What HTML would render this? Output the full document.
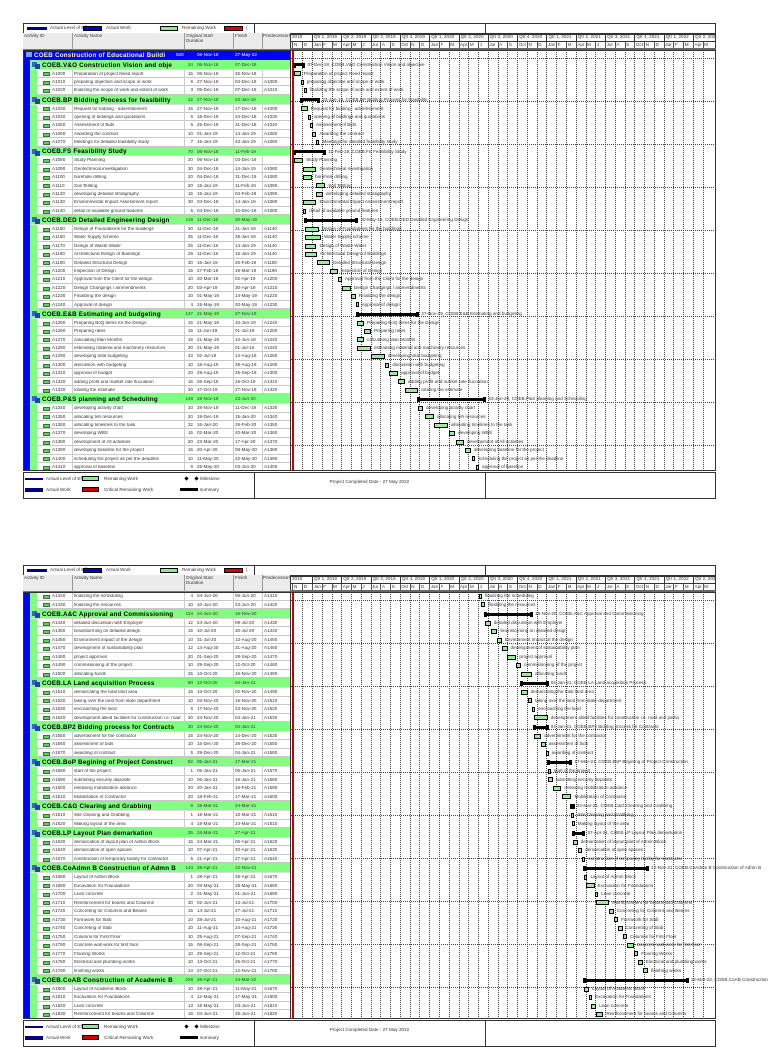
<!DOCTYPE html>
<html><head><meta charset="utf-8">
<style>
body{margin:0;width:768px;height:1024px;background:#fff;position:relative;overflow:hidden;font-family:"Liberation Sans",sans-serif;}
#root div{position:absolute;box-sizing:border-box;white-space:nowrap;}
.t{font-size:4.6px;color:#333;line-height:1;}
</style></head><body><div id="root"></div>
<script>
const R=document.getElementById('root');
function E(x,y,w,h,css,txt,cls){const d=document.createElement('div');d.style.cssText=`left:${x}px;top:${y}px;`+(w!=null?`width:${w}px;`:'')+(h!=null?`height:${h}px;`:'')+(css||'');if(txt!=null)d.textContent=txt;if(cls)d.className=cls;R.appendChild(d);return d;}
const MO=['Jan','Feb','Mar','Apr','May','Jun','Jul','Aug','Sep','Oct','Nov','Dec'];
function X(s,add){const [d,m,y]=s.split('-');return 312+((2000+ +y-2019)*12+MO.indexOf(m)+(+d-1+(add||0))/30.5)*9.77;}
const P1=[
['T','COEB','Construction of Educational Buildi','928','06-Nov-18','27-May-22',''],
['G','COEB.V&O','Construction Vision and obje','24','06-Nov-18','07-Dec-18','Construction Vision and objective'],
['t','A1000','Preparation of project Need report','15','06-Nov-18','26-Nov-18',''],
['t','A1010','preparing objective and scope or work','6','27-Nov-18','04-Dec-18','A1000'],
['t','A1020','finalizing the scope of work and extent of work','3','05-Dec-18','07-Dec-18','A1010'],
['G','COEB.BP','Bidding Process for feasibility','42','27-Nov-18','23-Jan-19','Bidding Process for feasibility'],
['t','A1030','Request for bidding - advertisement','15','27-Nov-18','17-Dec-18','A1000'],
['t','A1040','opening of biddings and quotations','5','18-Dec-18','24-Dec-18','A1030'],
['t','A1050','Assessment of Bids','5','25-Dec-18','31-Dec-18','A1040'],
['t','A1060','Awarding the contract','10','01-Jan-19','14-Jan-19','A1050'],
['t','A1070','Meetings for detailed feasibility study','7','15-Jan-19','23-Jan-19','A1060'],
['G','COEB.FS','Feasibility Study','70','06-Nov-18','11-Feb-19','Feasibility Study'],
['t','A1080','Study Planning','20','06-Nov-18','03-Dec-18',''],
['t','A1090','Geotechnical investigation','30','04-Dec-18','14-Jan-19','A1080'],
['t','A1100','borehole drilling','20','04-Dec-18','31-Dec-18','A1080'],
['t','A1110','Soil Testing','20','15-Jan-19','11-Feb-19','A1090'],
['t','A1120','developing detailed stratigraphy','15','15-Jan-19','04-Feb-19','A1090'],
['t','A1130','Environmental Impact Assessment report','30','04-Dec-18','14-Jan-19','A1080'],
['t','A1140','detail of available ground features','5','04-Dec-18','10-Dec-18','A1080'],
['G','COEB.DED','Detailed Engineering Design','115','11-Dec-18','20-May-19','Detailed Engineering Design'],
['t','A1150','Design of Foundations for the buildings','30','11-Dec-18','21-Jan-19','A1140'],
['t','A1160','Water Supply scheme','35','11-Dec-18','28-Jan-19','A1140'],
['t','A1170','Design of Waste Water','25','11-Dec-18','14-Jan-19','A1140'],
['t','A1180','Architectural Design of Buildings','26','11-Dec-18','15-Jan-19','A1140'],
['t','A1190','Detailed Structural Design','30','16-Jan-19','26-Feb-19','A1180'],
['t','A1200','Inspection of Design','15','27-Feb-19','19-Mar-19','A1190'],
['t','A1210','Approval from the Client for the design','10','20-Mar-19','02-Apr-19','A1200'],
['t','A1220','Design Changings / ammendments','20','03-Apr-19','30-Apr-19','A1210'],
['t','A1230','Finalizing the design','10','01-May-19','14-May-19','A1220'],
['t','A1240','Approval of design','4','15-May-19','20-May-19','A1230'],
['G','COEB.E&B','Estimating and budgeting','137','21-May-19','27-Nov-19','Estimating and budgeting'],
['t','A1250','Preparing BoQ items for the Design','15','21-May-19','10-Jun-19','A1240'],
['t','A1260','Preparing rates','15','11-Jun-19','01-Jul-19','A1250'],
['t','A1270','calculating Man Months','15','21-May-19','10-Jun-19','A1240'],
['t','A1280','estimating material and machinery resources','30','21-May-19','01-Jul-19','A1240'],
['t','A1290','developing total budgeting','33','02-Jul-19','14-Aug-19','A1280'],
['t','A1300','discussion with budgeting','10','15-Aug-19','28-Aug-19','A1290'],
['t','A1310','approval of budget','20','29-Aug-19','25-Sep-19','A1300'],
['t','A1320','adding profit and market rate flucuation','15','26-Sep-19','16-Oct-19','A1310'],
['t','A1330','totaling the estimate','30','17-Oct-19','27-Nov-19','A1320'],
['G','COEB.P&S','planning and Scheduling','149','28-Nov-19','23-Jun-20','planning and Scheduling'],
['t','A1340','developing activity chart','10','28-Nov-19','11-Dec-19','A1330'],
['t','A1350','allocating teh resources','20','19-Dec-19','15-Jan-20','A1340'],
['t','A1360','allocating timelines to the task','32','16-Jan-20','28-Feb-20','A1350'],
['t','A1370','developing WBS','15','02-Mar-20','20-Mar-20','A1360'],
['t','A1380','development of All activities','20','23-Mar-20','17-Apr-20','A1370'],
['t','A1390','developing baseline for the project','15','20-Apr-20','08-May-20','A1380'],
['t','A1400','scheduling the project as per the deadline','10','11-May-20','22-May-20','A1390'],
['t','A1410','approval of baseline','6','25-May-20','03-Jun-20','A1400'],
];
const P2=[
['t','A1420','finalizing the scheduling','4','04-Jun-20','09-Jun-20','A1410'],
['t','A1430','finalizing the resources','10','10-Jun-20','23-Jun-20','A1420'],
['G','COEB.A&C','Approval and Commissioning','104','24-Jun-20','16-Nov-20','Approval and Commissioning'],
['t','A1440','detailed discussion with Employer','12','24-Jun-20','09-Jul-20','A1430'],
['t','A1450','brainstorming on detailed design','15','10-Jul-20','30-Jul-20','A1440'],
['t','A1460','Environment impact of the design','10','31-Jul-20','13-Aug-20','A1450'],
['t','A1470','development of sustainability plan','12','14-Aug-20','31-Aug-20','A1460'],
['t','A1480','project approval','20','01-Sep-20','28-Sep-20','A1470'],
['t','A1490','commissioning of the project','10','29-Sep-20','12-Oct-20','A1480'],
['t','A1500','allocating funds','25','13-Oct-20','16-Nov-20','A1490'],
['G','COEB.LA','Land acquisition Process','60','13-Oct-20','04-Jan-21','Land acquisition Process'],
['t','A1510','demarcating the total land area','15','13-Oct-20','02-Nov-20','A1490'],
['t','A1520','taking over the land from state department','10','03-Nov-20','16-Nov-20','A1510'],
['t','A1530','encroaching the land','5','17-Nov-20','23-Nov-20','A1520'],
['t','A1540','development allied facilities for construction i.e. road and patha','30','24-Nov-20','04-Jan-21','A1530'],
['G','COEB.BP2','Bidding process for Contracts','30','24-Nov-20','04-Jan-21','Bidding process for Contracts'],
['t','A1550','advertisment for the contractor','15','24-Nov-20','14-Dec-20','A1530'],
['t','A1560','assessment of bids','10','15-Dec-20','28-Dec-20','A1550'],
['t','A1570','awarding of contract','5','29-Dec-20','04-Jan-21','A1560'],
['G','COEB.BoP','Begining of Project Construct','52','05-Jan-21','17-Mar-21','Begining of Project Construction'],
['t','A1580','start of the project','1','05-Jan-21','05-Jan-21','A1570'],
['t','A1590','submitting security deposits','10','06-Jan-21','19-Jan-21','A1580'],
['t','A1600','releasing mobilization advance','20','20-Jan-21','16-Feb-21','A1590'],
['t','A1610','Mobilization of Contractor','20','18-Feb-21','17-Mar-21','A1600'],
['G','COEB.C&G','Clearing and Grabbing','5','18-Mar-21','24-Mar-21','Clearing and Grabbing'],
['t','A1610','Site Clearing and Grabbing','1','18-Mar-21','18-Mar-21','A1610'],
['t','A1620','Making layout of the area','4','19-Mar-21','24-Mar-21','A1610'],
['G','COEB.LP','Layout Plan demarkation','25','24-Mar-21','27-Apr-21','Layout Plan demarkation'],
['t','A1630','demarcation of layout plan of Admin Block','15','24-Mar-21','06-Apr-21','A1620'],
['t','A1640','demarcation of open spaces','10','07-Apr-21','20-Apr-21','A1630'],
['t','A1670','construction of temporary facility for contractor','5','21-Apr-21','27-Apr-21','A1640'],
['G','COEB.CoAdmn B','Construction of Admn B','143','28-Apr-21','12-Nov-21','Construction of Admn B'],
['t','A1680','Layout of Admin Block','1','28-Apr-21','28-Apr-21','A1670'],
['t','A1690','Excavation for Foundations','20','03-May-21','28-May-21','A1680'],
['t','A1700','Lean concrete','2','31-May-21','01-Jun-21','A1690'],
['t','A1710','Reinforcement for beams and Columns','30','02-Jun-21','13-Jul-21','A1700'],
['t','A1720','Concreting for Columns and Beams','15','14-Jul-21','27-Jul-21','A1710'],
['t','A1730','Formwork for Slab','10','28-Jul-21','10-Aug-21','A1720'],
['t','A1740','Concreting of Slab','10','11-Aug-21','24-Aug-21','A1730'],
['t','A1750','Columns for First Floor','10','25-Aug-21','07-Sep-21','A1740'],
['t','A1760','Concrete wall work for first floor','15','08-Sep-21','28-Sep-21','A1750'],
['t','A1770','Flooring Works','10','29-Sep-21','12-Oct-21','A1760'],
['t','A1780','Electrical and plumbing works','10','13-Oct-21','26-Oct-21','A1770'],
['t','A1790','finishing works','13','27-Oct-21','12-Nov-21','A1780'],
['G','COEB.CoAB','Construction of Academic B','228','28-Apr-21','14-Mar-22','Construction of Academic B'],
['t','A1800','Layout of Academic Block','10','28-Apr-21','11-May-21','A1670'],
['t','A1810','Excavation for Foundations','4','12-May-21','17-May-21','A1800'],
['t','A1820','Lean concrete','13','18-May-21','03-Jun-21','A1810'],
['t','A1830','Reinforcement for beams and Columns','16','04-Jun-21','25-Jun-21','A1820'],
];
const L=23,RR=716,G0=290;
function legendTop(y){
  E(L,y,RR-L,11,'border:1px solid #333;');
  E(254,y,1,11,'background:#333;');E(485,y,1,11,'background:#333;');
  E(27,y+4,20,3,'background:#000080;');E(50,y+3,null,null,'','Actual Level of Effort','t');
  E(83,y+3,19,5,'background:#0000cc;border:1px solid #000;');E(106,y+3,null,null,'','Actual Work','t');
  E(160,y+3,18,5,'background:#88ee88;border:1px solid #000;');E(182,y+3,null,null,'','Remaining Work','t');
  E(224,y+3,19,5,'background:#dd0000;border:1px solid #000;');E(246,y+3,null,null,'','(','t');
}
function header(y){
  E(L,y,G0-L,17,'background:#ebebeb;border-bottom:1px solid #777;');
  [72,184,233,262].forEach(x=>E(x,y,1,17,'background:#999;'));
  E(24,y+1,null,null,'','Activity ID','t');E(74,y+1,null,null,'','Activity Name','t');
  E(186,y+1,null,null,'','Original  Start','t');E(186,y+6,null,null,'','Duration','t');
  E(235,y+1,null,null,'','Finish','t');E(263,y+1,null,null,'','Predecessors','t');
  E(G0,y+1,RR-G0,16,'background:#fff;border:1px solid #333;');
  E(G0,y+8,RR-G0,1,'background:#333;');
  E(G0,y+15,RR-G0,3,'background:#666;');
  E(292,y+2,null,null,'','2018','t');
  let qn=['Qtr 1, 2019','Qtr 2, 2019','Qtr 3, 2019','Qtr 4, 2019','Qtr 1, 2020','Qtr 2, 2020','Qtr 3, 2020','Qtr 4, 2020','Qtr 1, 2021','Qtr 2, 2021','Qtr 3, 2021','Qtr 4, 2021','Qtr 1, 2022','Qtr 2, 2022'];
  qn.forEach((q,i)=>{const x=312+i*29.31;E(x,y+1,1,7,'background:#333;');E(x+2,y+2,i==13?RR-x-2:27,6,'overflow:hidden;',q,'t');});
  for(let i=-2;i<41;i++){const x=312+i*9.77;const m=(i+24)%12;const lab=[0,3,6,9].includes(m)?MO[m]:MO[m][0];
    E(x,y+9,1,6,'background:#555;');E(x+1.5,y+10,7,5,'overflow:hidden;',lab,'t');}
}
function page(top,rows,th,gh){
  legendTop(top);
  const y0=top+27;
  header(top+10);
  let y=y0;const pos=rows.map(r=>{const h=r[0]=='t'?th:gh;const o={y,h};y+=h;return o;});
  const yEnd=y;
  E(G0,y0,RR-G0,yEnd-y0,'border-left:1px solid #333;border-right:1px solid #333;');
  for(let i=-2;i<41;i++){const x=312+i*9.77;E(x,y0,0,yEnd-y0,'border-left:1px dotted #444;');}
  for(let yy=y0+8;yy<yEnd;yy+=43){E(G0,yy,RR-G0,0,'border-top:1px dotted #444;');}
  E(292,y0,1.5,yEnd-y0,'background:#c00;');
  E(L,y0,7,yEnd-y0,'background:#0000ff;');
  E(30,y0,7,yEnd-y0,'background:#80ff80;');
  rows.forEach((r,i)=>{const p=pos[i];const [k,id,nm,du,s,f,ex]=r;
    if(k=='T'){E(L,p.y,G0-L,p.h,'background:#0000ff;');
      E(26,p.y+2,6,5,'background:#7aa7e0;');
      E(34,p.y+1.5,148,8,'overflow:hidden;font-size:6.3px;font-weight:bold;color:#ffffa0;letter-spacing:0.2px;',id+'  '+nm);
      E(176,p.y+2.5,null,null,'color:#fff;',du,'t');E(197,p.y+2.5,null,null,'color:#fff;',s,'t');E(235,p.y+2.5,null,null,'color:#fff;',f,'t');}
    else if(k=='G'){E(30,p.y,G0-30,p.h,'background:#80ff80;border-bottom:1px solid #ddd;');
      E(32,p.y+2,5,5,'background:#3a5fd0;');E(35,p.y+4,5,5,'background:#2244aa;');
      E(42,p.y+1.8,140,8,'overflow:hidden;font-size:6.3px;font-weight:bold;color:#000;letter-spacing:0.2px;',id+'  '+nm);
      E(176,p.y+3,17,null,'text-align:right;',du,'t');E(197,p.y+3,null,null,'',s,'t');E(235,p.y+3,null,null,'',f,'t');
      const x1=X(s),x2=X(f,1);E(x1,p.y+3.5,x2-x1,3,'background:#000;');
      E(x1-1,p.y+3,3,5,'background:#000;');E(x2-2,p.y+3,3,5,'background:#000;');
      E(x2+3,p.y+3,null,null,'',f+', '+id+' '+ex,'t');}
    else{E(37,p.y,G0-37,p.h,'background:#fff;border-bottom:1px solid #c8c8c8;');
      [72,184,233,262].forEach(x=>E(x,p.y,1,p.h,'background:#ccc;'));
      E(43,p.y+p.h/2-1.5,7,4,'background:#66cc66;border:0.5px solid #2a7a2a;');
      E(52,p.y+2,null,null,'',id,'t');E(74,p.y+2,108,6,'overflow:hidden;',nm,'t');
      E(176,p.y+2,17,null,'text-align:right;',du,'t');E(197,p.y+2,null,null,'',s,'t');E(235,p.y+2,null,null,'',f,'t');E(264,p.y+2,null,null,'',ex,'t');
      const x1=X(s),x2=Math.max(X(f,1),X(s)+3);E(x1,p.y+p.h/2-2.5,x2-x1,5,'background:#99ee99;border:1px solid #000;');
      E(x2+3,p.y+2,null,null,'',nm,'t');}
  });
  E(L,y0,RR-L,yEnd-y0,'border:1px solid #333;');
  const by=yEnd+1;
  E(L,by,RR-L,27,'border:1px solid #333;');E(254,by,1,27,'background:#333;');E(485,by,1,27,'background:#333;');
  E(25,by+6,18,2,'background:#000080;');E(46,by+5,null,null,'','Actual Level of Effort','t');
  E(82,by+4,17,5,'background:#88ee88;border:1px solid #000;');E(104,by+5,null,null,'','Remaining Work','t');
  E(185,by+5,3,3,'background:#000;transform:rotate(45deg);');E(195,by+5,3,3,'background:#000;transform:rotate(45deg);');E(200,by+5,null,null,'','Milestone','t');
  E(25,by+16,18,4,'background:#000080;');E(46,by+16,null,null,'','Actual Work','t');
  E(82,by+15,17,5,'background:#cc0000;border:1px solid #000;');E(104,by+16,null,null,'','Critical Remaining Work','t');
  E(180,by+16,18,3,'background:#000;');E(200,by+16,null,null,'','summary','t');
  E(254,by+8,231,null,'text-align:center;','Project Completed Date - 27 May 2022','t');
}
page(23,P1,8.4,9.8);
page(565,P2,8.5,9.8);
</script></body></html>
